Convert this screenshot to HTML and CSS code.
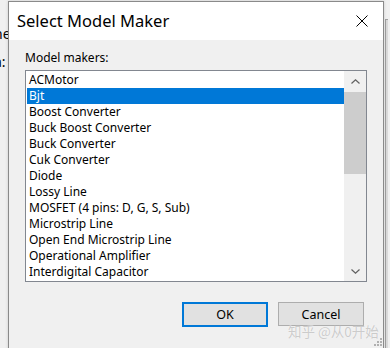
FILE: index.html
```html
<!DOCTYPE html>
<html lang="en">
<head>
    <meta charset="UTF-8">
    <title>Select Model Maker</title>
    <link rel="stylesheet" href="styles.css">
</head>
<body>
    <div class="behind">
        <span class="behind-text t1">ne</span>
        <span class="behind-text t2">a:</span>
        <div class="behind-edge"></div>
    </div>

    <div class="dialog">
        <div class="title-bar">
            <span class="title">Select Model Maker</span>
            <svg class="close" width="12" height="12" viewBox="0 0 12 12">
                <path d="M0.5 0.5 L11.5 11.5 M11.5 0.5 L0.5 11.5" stroke="#000" stroke-width="1" fill="none"/>
            </svg>
        </div>

        <div class="dialog-body">
            <label class="field-label">Model makers:</label>
            <div class="listbox">
                <ul class="items">
                    <li>ACMotor</li>
                    <li class="selected">Bjt</li>
                    <li>Boost Converter</li>
                    <li>Buck Boost Converter</li>
                    <li>Buck Converter</li>
                    <li>Cuk Converter</li>
                    <li>Diode</li>
                    <li>Lossy Line</li>
                    <li>MOSFET (4 pins: D, G, S, Sub)</li>
                    <li>Microstrip Line</li>
                    <li>Open End Microstrip Line</li>
                    <li>Operational Amplifier</li>
                    <li>Interdigital Capacitor</li>
                </ul>
                <div class="scrollbar">
                    <svg class="arrow" width="9" height="5" viewBox="0 0 9 5">
                        <path d="M0.5 4.5 L4.5 0.8 L8.5 4.5" stroke="#606060" stroke-width="1.2" fill="none"/>
                    </svg>
                    <div class="track">
                        <div class="thumb"></div>
                    </div>
                    <svg class="arrow" width="9" height="5" viewBox="0 0 9 5">
                        <path d="M0.5 0.5 L4.5 4.2 L8.5 0.5" stroke="#606060" stroke-width="1.2" fill="none"/>
                    </svg>
                </div>
            </div>

            <div class="button-row">
                <button class="btn default">OK</button>
                <button class="btn">Cancel</button>
            </div>
        </div>

        <div class="watermark">知乎 @从0开始</div>
        <svg class="grip" width="10" height="10" viewBox="0 0 10 10">
            <rect x="7" y="1" width="2" height="2" fill="#b0b0b0"/>
            <rect x="4" y="4" width="2" height="2" fill="#b0b0b0"/>
            <rect x="7" y="4" width="2" height="2" fill="#b0b0b0"/>
            <rect x="1" y="7" width="2" height="2" fill="#b0b0b0"/>
            <rect x="4" y="7" width="2" height="2" fill="#b0b0b0"/>
            <rect x="7" y="7" width="2" height="2" fill="#b0b0b0"/>
        </svg>
    </div>
</body>
</html>
```

FILE: styles.css
```css
body {
    margin: 0;
    padding: 0;
    width: 390px;
    height: 348px;
    overflow: hidden;
    background-color: #f0f0f0;
    font-family: "Noto Sans", "Open Sans", sans-serif;
    position: relative;
}

/* window behind the dialog */
.behind {
    position: absolute;
    left: 0;
    top: 0;
    width: 390px;
    height: 348px;
}

.behind-text {
    position: absolute;
    left: -6px;
    font-size: 14px;
    color: #000;
}

.t1 { top: 24px; }
.t2 { top: 52px; }

.behind-edge {
    position: absolute;
    left: 385px;
    top: 19px;
    width: 2px;
    height: 329px;
    border-left: 1px solid #a0a0a0;
    border-top: 1px solid #a0a0a0;
    background-color: #dadada;
}

/* dialog */
.dialog {
    position: absolute;
    left: 8px;
    top: 1px;
    width: 374px;
    height: 360px;
    border: 1px solid #8a8a8a;
    background-color: #f0f0f0;
    box-shadow: 0 0 3px rgba(0, 0, 0, 0.15);
}

.title-bar {
    height: 38px;
    background-color: #fff;
    display: flex;
    align-items: center;
    justify-content: space-between;
    padding: 0 15px 0 8px;
}

.title {
    font-size: 16.5px;
    color: #000;
    margin-top: -1px;
}

.dialog-body {
    padding: 10px 16px 0 16px;
}

.field-label {
    display: block;
    font-size: 12px;
    line-height: 16px;
    height: 20px;
    color: #000;
}

.listbox {
    display: flex;
    width: 339px;
    height: 208px;
    border: 1px solid #828790;
    background-color: #fff;
    padding: 1px 0 1px 1px;
}

.items {
    list-style: none;
    margin: 0;
    padding: 0;
    flex: 1;
}

.items li {
    font-size: 12px;
    line-height: 16px;
    height: 16px;
    padding-left: 2px;
    color: #000;
    white-space: nowrap;
    overflow: hidden;
}

.items li.selected {
    background-color: #0078d7;
    color: #fff;
}

.scrollbar {
    width: 22px;
    margin: -1px 0;
    background-color: #f0f0f0;
    display: flex;
    flex-direction: column;
    align-items: center;
}

.arrow {
    margin: 8px 0 7px;
}

.track {
    flex: 1;
    width: 100%;
    display: flex;
    flex-direction: column;
}

.thumb {
    margin-top: 1px;
    height: 82px;
    background-color: #cdcdcd;
}

.button-row {
    display: flex;
    justify-content: flex-end;
    gap: 10px;
    margin-top: 20px;
    padding-right: 3px;
}

.btn {
    width: 86px;
    height: 24px;
    font-family: "Noto Sans", "Open Sans", sans-serif;
    font-size: 12.5px;
    color: #000;
    background-color: #e1e1e1;
    border: 1px solid #adadad;
    padding: 0;
}

.btn.default {
    border: 2px solid #0078d7;
    height: 25px;
}

.watermark {
    position: absolute;
    left: 279px;
    top: 319px;
    font-family: "Noto Sans CJK SC", sans-serif;
    font-size: 13.5px;
    color: rgba(195, 195, 195, 0.85);
    text-shadow: 0 0 1px #fff;
    white-space: nowrap;
}

.grip {
    position: absolute;
    left: 364px;
    top: 335px;
}
```
